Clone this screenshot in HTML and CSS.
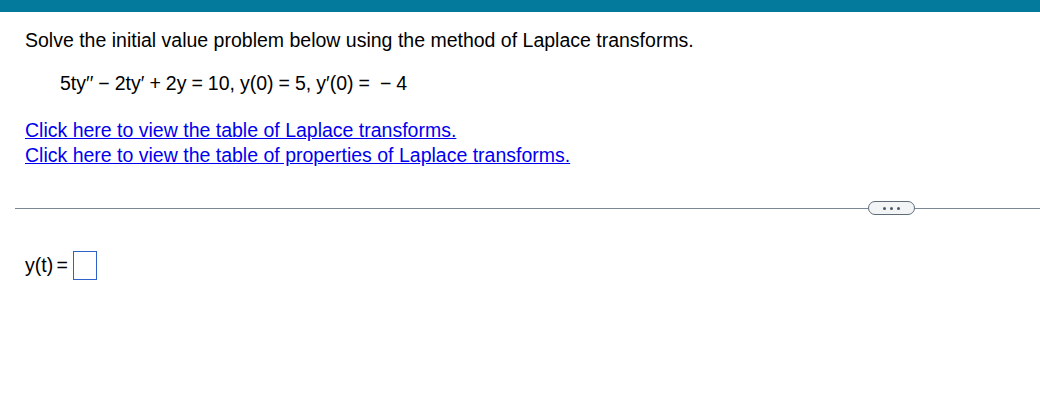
FILE: index.html
```html
<!DOCTYPE html>
<html>
<head>
<meta charset="utf-8">
<link rel="stylesheet" href="styles.css">
</head>
<body>
<div class="topbar"></div>
<div class="content">
  <p class="intro">Solve the initial value problem below using the method of Laplace transforms.</p>
  <p class="equation">5ty′′ − 2ty′ + 2y = 10, y(0) = 5, y′(0) = &nbsp;− 4</p>
  <div class="links">
    <a href="#">Click here to view the table of Laplace transforms.</a>
    <a href="#">Click here to view the table of properties of Laplace transforms.</a>
  </div>
</div>
<div class="divider">
  <span class="line short"></span>
  <span class="more"><i></i><i></i><i></i></span>
  <span class="line"></span>
</div>
<div class="answer">
  <span class="label">y(t) =</span>
  <span class="box"></span>
</div>
</body>
</html>
```
FILE: styles.css
```css
html, body {
  margin: 0;
  padding: 0;
  background: #fff;
}
body {
  font-family: "Liberation Sans", Arial, sans-serif;
  color: #000;
  width: 1040px;
  height: 401px;
  overflow: hidden;
}
.topbar {
  height: 12px;
  background: #03799b;
}
.content {
  padding: 0 0 0 25px;
}
.intro {
  margin: 0;
  padding-top: 17px;
  font-size: 19.5px;
  line-height: 22px;
}
.equation {
  margin: 21px 0 0 35px;
  font-size: 19.5px;
  line-height: 22px;
  word-spacing: -0.4px;
}
.links {
  display: flex;
  flex-direction: column;
  margin-top: 24px;
}
.links a {
  color: #0000ee;
  font-size: 19.5px;
  line-height: 25px;
  text-decoration: underline;
  width: max-content;
}
.divider {
  display: flex;
  align-items: center;
  margin: 33px 0 0 15px;
  height: 14px;
}
.line {
  flex: 1;
  height: 1px;
  background: #7c8794;
}
.line.short {
  flex: 0 0 853px;
}
.more {
  width: 45px;
  height: 12px;
  border: 1px solid #5e6c7a;
  border-radius: 7px;
  background: #f2f4f6;
  display: flex;
  align-items: center;
  justify-content: center;
  gap: 4px;
}
.more i {
  width: 3px;
  height: 3px;
  border-radius: 50%;
  background: #4a5866;
}
.answer {
  display: flex;
  align-items: center;
  margin: 36px 0 0 25px;
  gap: 5px;
}
.label {
  font-size: 19.5px;
  word-spacing: -2px;
}
.box {
  width: 22px;
  height: 27px;
  border: 1px solid #2f62c9;
}
```
